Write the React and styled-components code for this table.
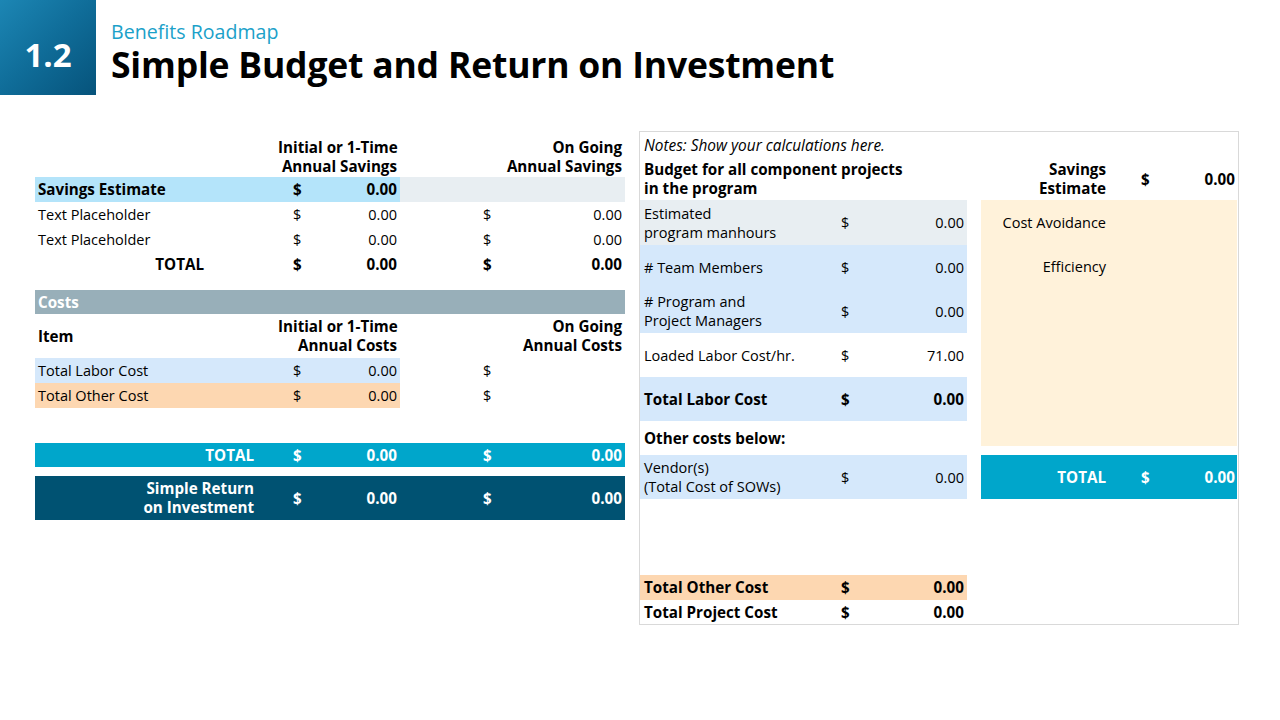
import React from 'react'
import styled, { createGlobalStyle, css } from 'styled-components'

const GlobalStyle = createGlobalStyle`
  html, body { margin:0; padding:0; background:#fff; }
  body {
    font-family: "Open Sans", "Noto Sans", "Liberation Sans", sans-serif;
    color:#000;
    font-size:14.5px;
  }
  * { box-sizing:border-box; }
`

const C = {
  cyan: '#b4e4fa',
  gray: '#e8eef2',
  blue: '#d5e8fb',
  peach: '#fdd7b1',
  cream: '#fff2da',
  slate: '#98afb9',
  teal: '#00a6cb',
  navy: '#005272',
}

const bold = css`
  font-weight:700;
  font-size:15.2px;
`

const Page = styled.div`
  width:1280px;
  height:720px;
  overflow:hidden;
  background:#fff;
`

const Header = styled.header`
  display:flex;
  height:95px;
`

const Badge = styled.div`
  width:96px;
  display:flex;
  align-items:center;
  justify-content:center;
  padding-top:14px;
  background:linear-gradient(135deg, #1c86b4 0%, #0f6c98 50%, #06537b 100%);
  color:#fff;
  font-weight:700;
  font-size:33px;
`

const Titles = styled.div`
  padding:20px 0 0 15px;
  display:flex;
  flex-direction:column;
`

const Kicker = styled.div`
  font-size:19.6px;
  line-height:24px;
  color:#1ba1c9;
`

const Title = styled.h1`
  margin:0;
  font-size:35.5px;
  line-height:40px;
  font-weight:700;
  letter-spacing:-0.2px;
`

const Main = styled.main`
  display:flex;
  align-items:flex-start;
  padding:36px 0 0 35px;
  gap:14px;
`

/* ---------- left sheet ---------- */

const Sheet = styled.section`
  width:590px;
  margin-top:5px;
  display:flex;
  flex-direction:column;
`

const HeadRow = styled.div`
  display:grid;
  grid-template-columns:240px 125px 225px;
  align-items:center;
  height:${p => p.$h || 41}px;
  line-height:19px;
  ${bold}
`

const HeadCell = styled.div`
  text-align:${p => p.$align || 'right'};
  padding:0 3px;
  white-space:nowrap;
`

const Row = styled.div`
  display:grid;
  grid-template-columns:255px 110px 80px 145px;
  height:${p => p.$h || 25}px;
  margin-top:${p => p.$mt || 0}px;
  background:${p => p.$bg || 'transparent'};
  color:${p => p.$color || '#000'};
  line-height:19px;
  ${p => p.$bold && bold}
`

const Cell = styled.div`
  display:flex;
  align-items:center;
  justify-content:${p => (p.$right ? 'flex-end' : 'flex-start')};
  text-align:${p => (p.$right ? 'right' : 'left')};
  padding:0 ${p => p.$pr || 3}px 0 3px;
  background:${p => p.$bg || 'transparent'};
  white-space:nowrap;
`

const Money = styled.div`
  display:flex;
  align-items:center;
  justify-content:space-between;
  padding:0 3px;
  background:${p => p.$bg || 'transparent'};
`

const SectionBar = styled.div`
  height:24px;
  margin-top:13px;
  padding-left:3px;
  display:flex;
  align-items:center;
  background:${C.slate};
  color:#fff;
  ${bold}
`

/* ---------- right panel ---------- */

const Panel = styled.section`
  width:600px;
  height:494px;
  border:1px solid #d9d9d9;
  display:flex;
  flex-direction:column;
`

const Note = styled.div`
  height:26px;
  padding-left:4px;
  display:flex;
  align-items:center;
  font-style:italic;
  font-size:15.4px;
`

const Columns = styled.div`
  display:flex;
  gap:14px;
  align-items:flex-start;
`

const Budget = styled.div`
  width:327px;
  display:flex;
  flex-direction:column;
`

const BudgetHead = styled.div`
  height:42px;
  padding-left:4px;
  display:flex;
  align-items:center;
  line-height:19px;
  white-space:nowrap;
  ${bold}
`

const BRow = styled.div`
  display:grid;
  grid-template-columns:198px 129px;
  height:${p => p.$h || 44}px;
  margin-top:${p => p.$mt || 0}px;
  background:${p => p.$bg || 'transparent'};
  line-height:19px;
  ${p => p.$bold && bold}
  > div:first-child {
    padding-left:4px;
    display:flex;
    align-items:center;
    white-space:nowrap;
  }
`

const Savings = styled.div`
  width:256px;
  display:flex;
  flex-direction:column;
`

const SRow = styled.div`
  display:grid;
  grid-template-columns:129px 127px;
  height:${p => p.$h || 44}px;
  background:${p => p.$bg || 'transparent'};
  color:${p => p.$color || '#000'};
  line-height:19px;
  ${p => p.$bold && bold}
  > div:first-child {
    padding-right:4px;
    display:flex;
    align-items:center;
    justify-content:flex-end;
    text-align:right;
    white-space:nowrap;
  }
`

const SMoney = styled(Money)`
  padding:0 2px 0 31px;
`

const Cream = styled.div`
  height:246px;
  background:${C.cream};
  margin-bottom:9px;
`

function Amount({ bg, value = '0.00', as }) {
  const Comp = as || Money
  return (
    <Comp $bg={bg}>
      <span>$</span>
      <span>{value}</span>
    </Comp>
  )
}

function App() {
  return (
    <Page>
      <GlobalStyle />
      <Header>
        <Badge>1.2</Badge>
        <Titles>
          <Kicker>Benefits Roadmap</Kicker>
          <Title>Simple Budget and Return on Investment</Title>
        </Titles>
      </Header>

      <Main>
        <Sheet>
          <HeadRow>
            <HeadCell />
            <HeadCell>Initial or 1-Time<br />Annual Savings</HeadCell>
            <HeadCell>On Going<br />Annual Savings</HeadCell>
          </HeadRow>
          <Row $bold>
            <Cell $bg={C.cyan}>Savings Estimate</Cell>
            <Amount bg={C.cyan} />
            <Cell $bg={C.gray} />
            <Cell $bg={C.gray} />
          </Row>
          <Row>
            <Cell>Text Placeholder</Cell>
            <Amount />
            <Cell />
            <Amount />
          </Row>
          <Row>
            <Cell>Text Placeholder</Cell>
            <Amount />
            <Cell />
            <Amount />
          </Row>
          <Row $bold>
            <Cell $right $pr={86}>TOTAL</Cell>
            <Amount />
            <Cell />
            <Amount />
          </Row>

          <SectionBar>Costs</SectionBar>
          <HeadRow $h={44}>
            <HeadCell $align="left">Item</HeadCell>
            <HeadCell>Initial or 1-Time<br />Annual Costs</HeadCell>
            <HeadCell>On Going<br />Annual Costs</HeadCell>
          </HeadRow>
          <Row>
            <Cell $bg={C.blue}>Total Labor Cost</Cell>
            <Amount bg={C.blue} />
            <Cell />
            <Money><span>$</span></Money>
          </Row>
          <Row>
            <Cell $bg={C.peach}>Total Other Cost</Cell>
            <Amount bg={C.peach} />
            <Cell />
            <Money><span>$</span></Money>
          </Row>

          <Row $bold $bg={C.teal} $color="#fff" $h={24} $mt={35}>
            <Cell $right $pr={36}>TOTAL</Cell>
            <Amount />
            <Cell />
            <Amount />
          </Row>
          <Row $bold $bg={C.navy} $color="#fff" $h={44} $mt={9}>
            <Cell $right $pr={36}>Simple Return<br />on Investment</Cell>
            <Amount />
            <Cell />
            <Amount />
          </Row>
        </Sheet>

        <Panel>
          <Note>Notes: Show your calculations here.</Note>
          <Columns>
            <Budget>
              <BudgetHead>Budget for all component projects<br />in the program</BudgetHead>
              <BRow $bg={C.gray} $h={45}>
                <div>Estimated<br />program manhours</div>
                <Amount />
              </BRow>
              <BRow $bg={C.blue}>
                <div># Team Members</div>
                <Amount />
              </BRow>
              <BRow $bg={C.blue}>
                <div># Program and<br />Project Managers</div>
                <Amount />
              </BRow>
              <BRow>
                <div>Loaded Labor Cost/hr.</div>
                <Amount value="71.00" />
              </BRow>
              <BRow $bg={C.blue} $bold>
                <div>Total Labor Cost</div>
                <Amount />
              </BRow>
              <BRow $bold $h={34}>
                <div>Other costs below:</div>
              </BRow>
              <BRow $bg={C.blue}>
                <div>Vendor(s)<br />(Total Cost of SOWs)</div>
                <Amount />
              </BRow>
              <BRow $bg={C.peach} $bold $h={25} $mt={76}>
                <div>Total Other Cost</div>
                <Amount />
              </BRow>
              <BRow $bold $h={24}>
                <div>Total Project Cost</div>
                <Amount />
              </BRow>
            </Budget>

            <Savings>
              <SRow $bold $h={42}>
                <div>Savings<br />Estimate</div>
                <Amount as={SMoney} />
              </SRow>
              <Cream>
                <SRow>
                  <div>Cost Avoidance</div>
                </SRow>
                <SRow>
                  <div>Efficiency</div>
                </SRow>
              </Cream>
              <SRow $bold $bg={C.teal} $color="#fff">
                <div>TOTAL</div>
                <Amount as={SMoney} />
              </SRow>
            </Savings>
          </Columns>
        </Panel>
      </Main>
    </Page>
  )
}

export default App
